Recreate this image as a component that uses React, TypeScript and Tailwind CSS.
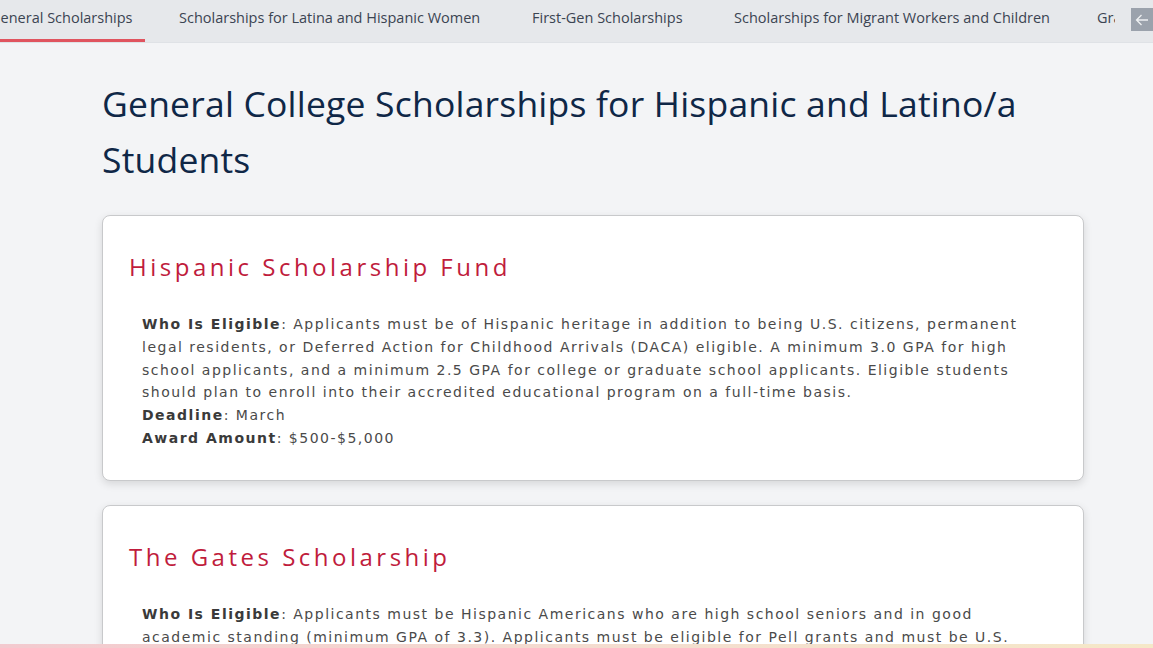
import React from 'react';

const TABS = [
  { label: 'General Scholarships', w: 'w-[169px] ml-[-24px]', active: true },
  { label: 'Scholarships for Latina and Hispanic Women', w: 'w-[333px]', active: false },
  { label: 'First-Gen Scholarships', w: 'w-[182px]', active: false },
  { label: 'Scholarships for Migrant Workers and Children', w: 'w-[343px]', active: false },
  { label: 'Graduate Scholarships', w: 'w-[180px]', active: false },
];

const SCHOLARSHIPS = [
  {
    name: 'Hispanic Scholarship Fund',
    eligible:
      'Applicants must be of Hispanic heritage in addition to being U.S. citizens, permanent legal residents, or Deferred Action for Childhood Arrivals (DACA) eligible. A minimum 3.0 GPA for high school applicants, and a minimum 2.5 GPA for college or graduate school applicants. Eligible students should plan to enroll into their accredited educational program on a full-time basis.',
    deadline: 'March',
    amount: '$500-$5,000',
  },
  {
    name: 'The Gates Scholarship',
    eligible:
      'Applicants must be Hispanic Americans who are high school seniors and in good academic standing (minimum GPA of 3.3). Applicants must be eligible for Pell grants and must be U.S. citizens, nationals, or permanent residents.',
    deadline: 'September',
    amount: 'Full cost of attendance',
  },
];

export default function App() {
  return (
    <div className="relative h-[648px] overflow-hidden bg-[#f3f4f6] font-['Open_Sans',sans-serif]">
      {/* Tab strip */}
      <nav className="relative flex h-[43px] items-stretch border-b border-[#dfe2e6] bg-[#e6e8eb]">
        <div className="flex w-[1115px] flex-nowrap gap-[20px] overflow-hidden whitespace-nowrap">
          {TABS.map((t) => (
            <div
              key={t.label}
              className={`${t.w} relative shrink-0 pl-[14px] pt-[7px] text-[14.5px] text-[#3b4452]`}
            >
              {t.label}
              {t.active && <span className="absolute bottom-0 left-0 right-0 h-[3px] bg-[#e0545f]" />}
            </div>
          ))}
        </div>
        <button className="absolute right-0 top-[8px] flex h-[23px] w-[22px] items-center justify-center bg-[#9ba2ac]">
          <svg width="14" height="12" viewBox="0 0 14 12" fill="none" stroke="#eef0f2" strokeWidth="1.3">
            <path d="M13 6H1.5M6.5 1L1.5 6l5 5" />
          </svg>
        </button>
      </nav>

      {/* Main content */}
      <main className="ml-[102px] w-[982px] pt-[32px]">
        <h1 className="text-[35.5px] leading-[56px] text-[#0f2747] tracking-[0.2px]">
          General College Scholarships for Hispanic and Latino/a Students
        </h1>

        <div className="mt-[28px] flex flex-col gap-[24px]">
          {SCHOLARSHIPS.map((s) => (
            <section
              key={s.name}
              className="rounded-[8px] border border-[#c8c9cb] bg-white pb-[30px] pt-[37px] shadow-[0_3px_8px_rgba(0,0,0,0.12)]"
            >
              <h2 className="pl-[26px] text-[24px] leading-[28px] tracking-[3.5px] text-[#c01c3c]">{s.name}</h2>
              <div className="mt-[32px] pl-[39px] pr-[46px] font-['DejaVu_Sans',sans-serif] text-[14px] leading-[22.8px] tracking-[1.5px] text-[#4a4a4a]">
                <p>
                  <b className="font-bold text-[#3a3a3a]">Who Is Eligible</b>: {s.eligible}
                </p>
                <p>
                  <b className="font-bold text-[#3a3a3a]">Deadline</b>: {s.deadline}
                </p>
                <p>
                  <b className="font-bold text-[#3a3a3a]">Award Amount</b>: {s.amount}
                </p>
              </div>
            </section>
          ))}
        </div>
      </main>

      {/* Bottom notice strip */}
      <div className="absolute bottom-0 left-0 right-0 h-[4px] bg-gradient-to-r from-[#f3c9cf] via-[#f4dcd0] to-[#f5e8c8]" />
    </div>
  );
}
